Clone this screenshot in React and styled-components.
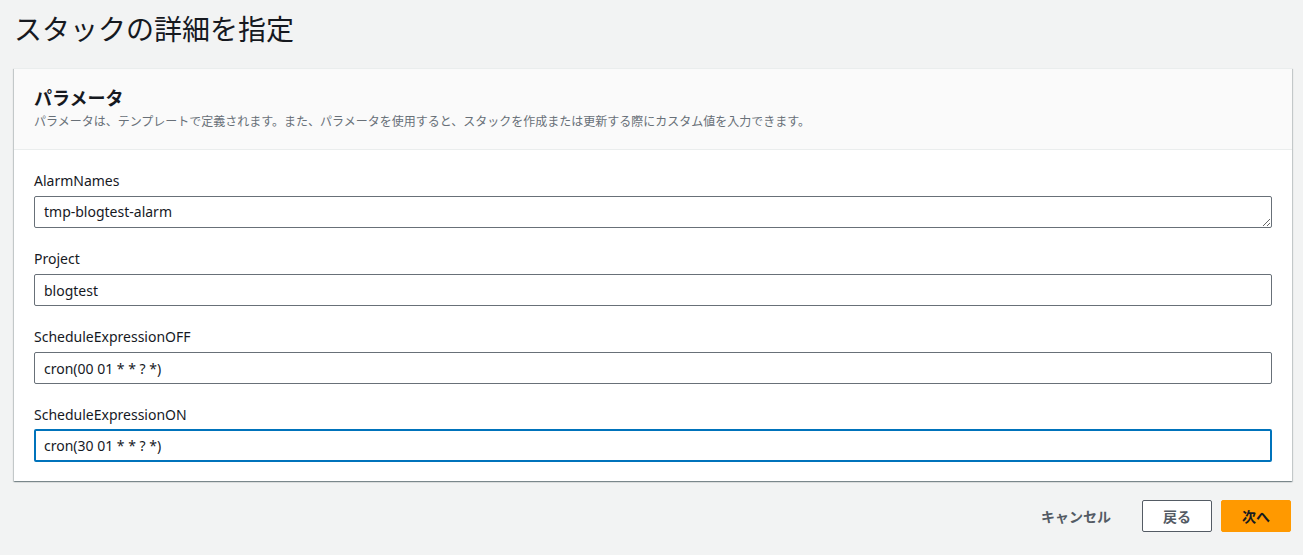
import React from "react";
import styled, { createGlobalStyle } from "styled-components";

const Global = createGlobalStyle`
  html, body { margin: 0; padding: 0; background: #f2f3f3; }
  body {
    font-family: "Noto Sans", "Noto Sans CJK JP", sans-serif;
    color: #16191f;
    -webkit-font-smoothing: antialiased;
  }
  * { box-sizing: border-box; }
`;

const Page = styled.div`
  display: flex;
  flex-direction: column;
  padding: 8px 11px 0 14px;
  min-height: 555px;
`;

const Title = styled.h1`
  margin: 0;
  font-size: 28px;
  line-height: 40px;
  font-weight: 400;
  color: #16191f;
  font-family: "Noto Sans CJK JP", sans-serif;
`;

const Card = styled.section`
  margin-top: 20px;
  background: #fff;
  box-shadow: 0 1px 1px 0 rgba(0, 28, 36, 0.3), 1px 1px 1px 0 rgba(0, 28, 36, 0.15),
    -1px 1px 1px 0 rgba(0, 28, 36, 0.15);
  border-top: 1px solid #eaeded;
`;

const CardHeader = styled.header`
  background: #fafafa;
  border-bottom: 1px solid #eaeded;
  padding: 17px 20px 20px;
  display: flex;
  flex-direction: column;
  gap: 5px;
`;

const Heading = styled.h2`
  margin: 0;
  font-size: 18px;
  line-height: 22px;
  font-weight: 700;
  font-family: "Noto Sans CJK JP", sans-serif;
`;

const Description = styled.p`
  margin: 0;
  font-size: 12px;
  line-height: 16px;
  color: #687078;
  font-family: "Noto Sans CJK JP", sans-serif;
`;

const CardBody = styled.div`
  padding: 21px 20px 19px;
  display: flex;
  flex-direction: column;
  gap: 21px;
`;

const Field = styled.div`
  display: flex;
  flex-direction: column;
  gap: ${(p) => (p.$tight ? "4px" : "5px")};
`;

const Label = styled.label`
  font-size: 14px;
  line-height: 20px;
  color: #16191f;
`;

const inputBase = `
  width: 100%;
  font-family: "Noto Sans", "Noto Sans CJK JP", sans-serif;
  font-size: 14px;
  color: #16191f;
  background: #fff;
  border-radius: 2px;
  outline: none;
  margin: 0;
`;

const TextArea = styled.textarea`
  ${inputBase}
  display: block;
  height: 32px;
  min-height: 32px;
  line-height: 20px;
  padding: 5px 9px;
  border: 1px solid #687078;
  resize: vertical;
  overflow: hidden;
`;

const Input = styled.input`
  ${inputBase}
  height: ${(p) => (p.$focused ? "33px" : "32px")};
  line-height: 20px;
  padding: ${(p) => (p.$focused ? "0 8px" : "0 9px")};
  border: ${(p) => (p.$focused ? "2px solid #0073bb" : "1px solid #687078")};
`;

const Actions = styled.div`
  display: flex;
  justify-content: flex-end;
  align-items: center;
  gap: 9px;
  margin-top: 19px;
  padding-right: 1px;
`;

const Button = styled.button`
  font-family: "Noto Sans CJK JP", sans-serif;
  font-size: 14px;
  font-weight: 700;
  line-height: 20px;
  height: 32px;
  padding: 0 20px;
  border-radius: 2px;
  cursor: pointer;
  border: 1px solid
    ${(p) => (p.$variant === "primary" ? "#ff9900" : p.$variant === "link" ? "transparent" : "#545b64")};
  background: ${(p) => (p.$variant === "primary" ? "#ff9900" : p.$variant === "link" ? "transparent" : "#fff")};
  color: ${(p) => (p.$variant === "primary" ? "#16191f" : "#545b64")};
  ${(p) => (p.$variant === "link" ? "margin-right: 1px;" : "")}
`;

const fields = [
  { label: "AlarmNames", value: "tmp-blogtest-alarm", multi: true },
  { label: "Project", value: "blogtest" },
  { label: "ScheduleExpressionOFF", value: "cron(00 01 * * ? *)" },
  { label: "ScheduleExpressionON", value: "cron(30 01 * * ? *)", focused: true },
];

export default function App() {
  return (
    <>
      <Global />
      <Page>
        <Title>スタックの詳細を指定</Title>
        <Card>
          <CardHeader>
            <Heading>パラメータ</Heading>
            <Description>
              パラメータは、テンプレートで定義されます。また、パラメータを使用すると、スタックを作成または更新する際にカスタム値を入力できます。
            </Description>
          </CardHeader>
          <CardBody>
            {fields.map((f) => (
              <Field key={f.label} $tight={f.focused}>
                <Label>{f.label}</Label>
                {f.multi ? (
                  <TextArea defaultValue={f.value} rows={1} />
                ) : (
                  <Input defaultValue={f.value} $focused={f.focused} />
                )}
              </Field>
            ))}
          </CardBody>
        </Card>
        <Actions>
          <Button $variant="link">キャンセル</Button>
          <Button>戻る</Button>
          <Button $variant="primary">次へ</Button>
        </Actions>
      </Page>
    </>
  );
}
